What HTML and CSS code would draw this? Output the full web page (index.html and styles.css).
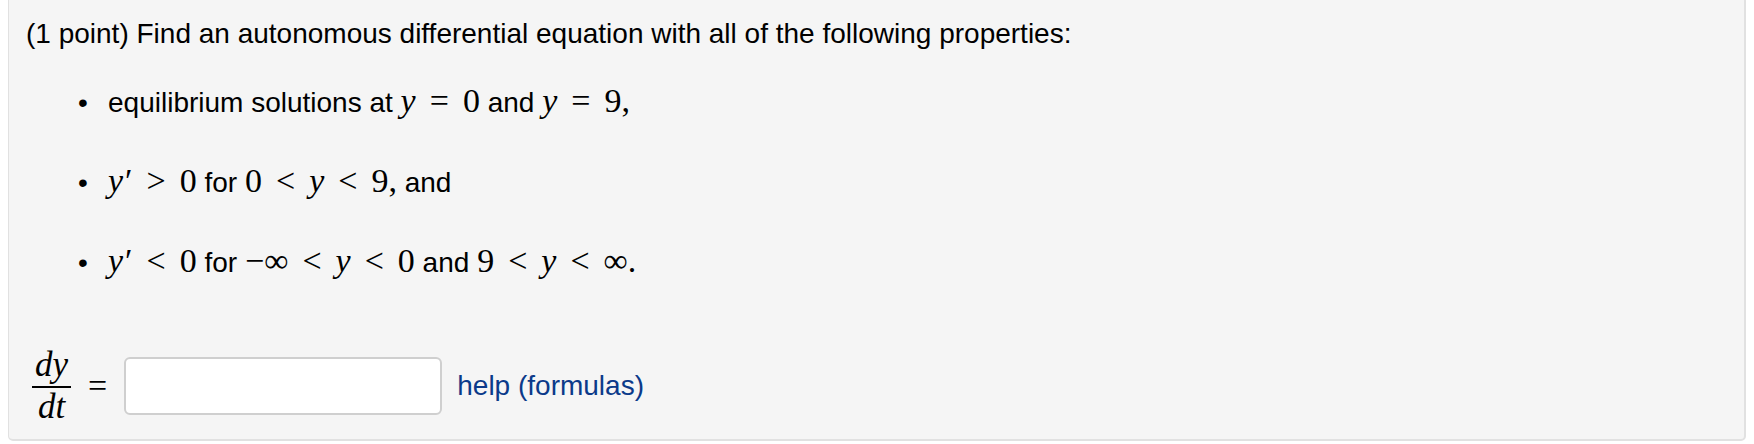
FILE: index.html
```
<!DOCTYPE html>
<html lang="en">
<head>
<meta charset="utf-8">
<title>Autonomous differential equation</title>
<link rel="stylesheet" href="styles.css">
</head>
<body>
<div class="card">
  <p class="title">(1 point) Find an autonomous differential equation with all of the following properties:</p>
  <ul class="props">
    <li>equilibrium solutions at <span class="m"><i>y</i><span class="rel">=</span>0</span> and <span class="m"><i>y</i><span class="rel">=</span>9,</span></li>
    <li><span class="m"><i>y</i><span class="pr">&prime;</span><span class="rel">&gt;</span>0</span> for <span class="m">0<span class="rel">&lt;</span><i>y</i><span class="rel">&lt;</span>9,</span> and</li>
    <li><span class="m"><i>y</i><span class="pr">&prime;</span><span class="rel">&lt;</span>0</span> for <span class="m">&minus;&infin;<span class="rel">&lt;</span><i>y</i><span class="rel">&lt;</span>0</span> and <span class="m">9<span class="rel">&lt;</span><i>y</i><span class="rel">&lt;</span>&infin;.</span></li>
  </ul>
  <div class="answer">
    <span class="frac"><span class="num">dy</span><span class="bar"></span><span class="den">dt</span></span>
    <span class="eq">=</span>
    <input class="ans" type="text" aria-label="answer">
    <a class="help" href="#">help (formulas)</a>
  </div>
</div>
</body>
</html>
```
FILE: styles.css
```
html, body {
  background: #ffffff;
}
body {
  margin: 0 8px;
  font-family: "Liberation Sans", Arial, Helvetica, sans-serif;
  font-size: 28px;
  color: #000;
}
.card {
  margin-top: -4px;
  height: 445px;
  box-sizing: border-box;
  background: #f5f5f5;
  border: 1px solid #e1e1e1;
  border-right-width: 2px;
  border-bottom-width: 2px;
  border-radius: 5px;
  padding: 21px 17px 0 17px;
}
.title {
  margin: 0;
  line-height: 32px;
}
.props {
  margin: 33px 0 0 0;
  padding: 0 0 0 82px;
  list-style: none;
}
.props li {
  height: 40px;
  line-height: 40px;
  margin-bottom: 40px;
}
.props li:last-child {
  margin-bottom: 0;
}
.props li::before {
  content: "\2022";
  display: inline-block;
  width: 30px;
  margin-left: -30px;
}
.m {
  font-family: "Liberation Serif", "Times New Roman", serif;
  font-size: 34px;
  line-height: 1;
}
.m i, .frac {
  font-style: italic;
}
.rel {
  margin: 0 14px;
}
.pr {
  margin-left: 2px;
}
.answer {
  display: flex;
  align-items: center;
  margin-top: 65px;
}
.frac {
  display: inline-flex;
  flex-direction: column;
  align-items: center;
  font-family: "Liberation Serif", "Times New Roman", serif;
  font-size: 35px;
  margin-left: 6px;
}
.num, .den {
  display: block;
  line-height: 34px;
  padding: 0 3px;
}
.num {
  padding-bottom: 4px;
}
.den {
  padding-top: 2px;
}
.bar {
  display: block;
  width: 100%;
  height: 2px;
  background: #000;
}
.eq {
  font-family: "Liberation Serif", "Times New Roman", serif;
  font-size: 34px;
  margin: 0 17px 0 17px;
}
.ans {
  width: 318px;
  height: 58px;
  box-sizing: border-box;
  border: 2px solid #cfcfcf;
  border-radius: 6px;
  background: #fff;
  margin: 0;
  padding: 0 8px;
  font-size: 24px;
}
.help {
  margin-left: 15px;
  color: #0b3a8a;
  text-decoration: none;
}
```
